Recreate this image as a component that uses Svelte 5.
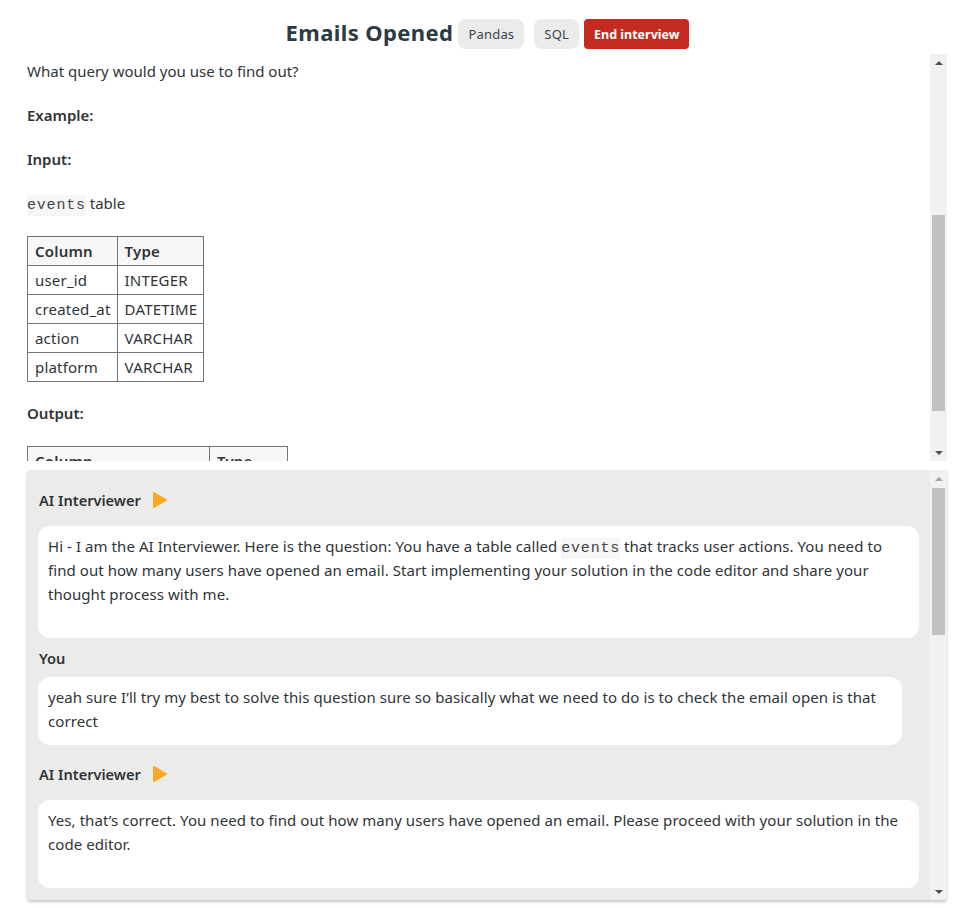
<script>
	const schema = [
		['user_id', 'INTEGER'],
		['created_at', 'DATETIME'],
		['action', 'VARCHAR'],
		['platform', 'VARCHAR']
	];
</script>

<div class="page">
	<header class="top">
		<h1>Emails Opened</h1>
		<span class="tag first">Pandas</span>
		<span class="tag">SQL</span>
		<button class="end" type="button">End interview</button>
	</header>

	<section class="question">
		<div class="scroll-body">
			<p class="first-line">What query would you use to find out?</p>
			<p><strong>Example:</strong></p>
			<p><strong>Input:</strong></p>
			<p><code>events</code> table</p>
			<table class="t1">
				<thead>
					<tr><th>Column</th><th>Type</th></tr>
				</thead>
				<tbody>
					{#each schema as row}
						<tr><td>{row[0]}</td><td>{row[1]}</td></tr>
					{/each}
				</tbody>
			</table>
			<p><strong>Output:</strong></p>
			<table class="t2">
				<thead>
					<tr><th class="wide">Column</th><th class="narrow">Type</th></tr>
				</thead>
			</table>
		</div>
		<div class="bar">
			<span class="arrow up"></span>
			<div class="track"><div class="thumb" style="margin-top: 144px; height: 196px"></div></div>
			<span class="arrow down"></span>
		</div>
	</section>

	<section class="chat">
		<div class="messages">
			<div class="who first-who">
				<strong>AI Interviewer</strong>
				<svg class="play" width="16" height="18" viewBox="0 0 16 18"><path d="M2 2 L14 9 L2 16 Z" fill="#f9a825" stroke="#f9a825" stroke-width="2" stroke-linejoin="round" /></svg>
			</div>
			<div class="bubble b1">Hi - I am the AI Interviewer. Here is the question: You have a table called <code>events</code> that tracks user actions. You need to find out how many users have opened an email. Start implementing your solution in the code editor and share your thought process with me.</div>
			<div class="who you"><strong>You</strong></div>
			<div class="bubble b2">yeah sure I’ll try my best to solve this question sure so basically what we need to do is to check the email open is that correct</div>
			<div class="who second-who">
				<strong>AI Interviewer</strong>
				<svg class="play" width="16" height="18" viewBox="0 0 16 18"><path d="M2 2 L14 9 L2 16 Z" fill="#f9a825" stroke="#f9a825" stroke-width="2" stroke-linejoin="round" /></svg>
			</div>
			<div class="bubble b3">Yes, that’s correct. You need to find out how many users have opened an email. Please proceed with your solution in the code editor.</div>
		</div>
		<div class="bar chat-bar">
			<span class="arrow up dim"></span>
			<div class="track"><div class="thumb" style="margin-top: 1px; height: 147px"></div></div>
			<span class="arrow down"></span>
		</div>
	</section>
</div>

<style>
	:global(body) {
		margin: 0;
		background: #fff;
	}

	.page {
		height: 908px;
		overflow: hidden;
		font-family: 'Noto Sans', sans-serif;
		font-size: 15px;
		color: #2f3437;
	}

	.top {
		height: 54px;
		display: flex;
		align-items: flex-start;
		justify-content: center;
		padding: 19px 0 0 18px;
		box-sizing: border-box;
	}

	h1 {
		margin: 0 5px 0 0;
		font-size: 22px;
		line-height: 26px;
		font-weight: 700;
		color: #2c3a44;
		letter-spacing: 0.4px;
	}

	.tag {
		height: 30px;
		line-height: 30px;
		padding: 0 10px;
		border-radius: 8px;
		background: #ebebeb;
		font-size: 13px;
		letter-spacing: 0.2px;
		color: #37474f;
		margin-right: 5px;
	}

	.tag.first {
		margin-right: 10px;
	}

	.end {
		height: 30px;
		border: none;
		border-radius: 4px;
		padding: 0 10px;
		background: #c42a20;
		color: #fff;
		font-family: inherit;
		font-size: 12.5px;
		font-weight: 700;
	}

	.question {
		margin-left: 27px;
		width: 920px;
		height: 407px;
		display: flex;
	}

	.scroll-body {
		flex: 1;
		overflow: hidden;
	}

	p {
		margin: 0 0 22px;
		line-height: 22px;
	}

	.first-line {
		padding-top: 6px;
	}

	strong {
		font-weight: 600;
	}

	code {
		font-family: 'Liberation Mono', monospace;
		font-size: 15px;
		line-height: 1;
		letter-spacing: 0.8px;
		padding: 2px 0;
		background: #f6f6f6;
		color: #444;
	}

	table {
		border-collapse: collapse;
		margin-bottom: 20px;
	}

	th,
	td {
		border: 1px solid #70757a;
		height: 29px;
		padding: 0 6px 0 7px;
		box-sizing: border-box;
		text-align: left;
		font-weight: 400;
		letter-spacing: 0.2px;
	}

	th {
		background: #f7f7f7;
		font-weight: 600;
	}

	.t2 .wide {
		width: 182px;
	}

	.t2 .narrow {
		width: 78px;
	}

	.bar {
		width: 17px;
		background: #f1f1f1;
		display: flex;
		flex-direction: column;
		flex-shrink: 0;
	}

	.arrow {
		height: 17px;
		flex-shrink: 0;
		display: flex;
		align-items: center;
		justify-content: center;
	}

	.arrow::before {
		content: '';
		border-left: 4px solid transparent;
		border-right: 4px solid transparent;
	}

	.arrow.up::before {
		border-bottom: 4px solid #505050;
	}

	.arrow.down::before {
		border-top: 4px solid #505050;
	}

	.arrow.up.dim::before {
		border-bottom-color: #a3a3a3;
	}

	.track {
		flex: 1;
		padding: 0 2px;
	}

	.thumb {
		background: #c1c1c1;
	}

	.chat {
		margin: 9px 0 0 27px;
		width: 920px;
		height: 430px;
		display: flex;
		background: #ebebe9;
		border-radius: 4px;
		box-shadow: 0 2px 3px rgba(0, 0, 0, 0.22);
		overflow: hidden;
	}

	.messages {
		flex: 1;
		padding-left: 11px;
		overflow: hidden;
	}

	.who {
		display: flex;
		align-items: center;
		gap: 11px;
		height: 22px;
	}

	.who strong {
		font-size: 14.6px;
		padding-left: 1px;
	}

	.first-who {
		margin-top: 19px;
	}

	.you {
		margin-top: 9px;
	}

	.second-who {
		margin-top: 18px;
	}

	.bubble {
		background: #fff;
		border-radius: 12px;
		padding: 8px 10px;
		line-height: 24px;
		letter-spacing: 0.065px;
		box-sizing: border-box;
	}

	.b1 {
		width: 881px;
		height: 112px;
		margin-top: 15px;
	}

	.b2 {
		width: 864px;
		height: 68px;
		margin-top: 8px;
	}

	.b3 {
		width: 881px;
		height: 88px;
		margin-top: 15px;
	}
</style>
